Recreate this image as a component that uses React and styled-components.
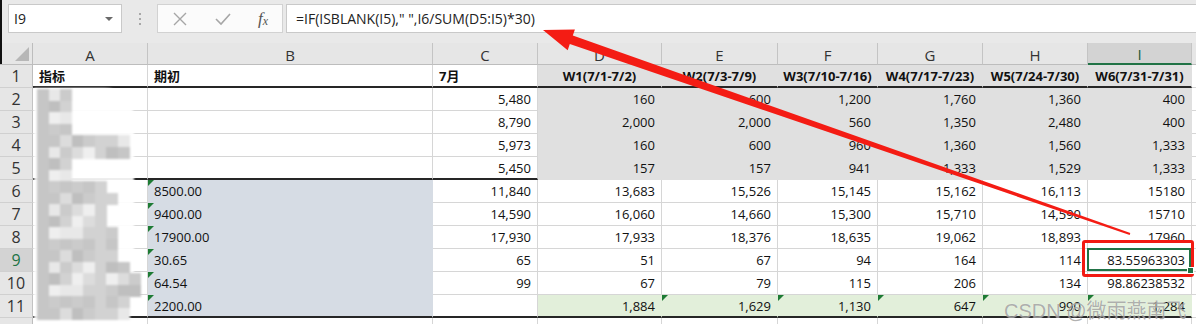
import React from 'react';
import styled, { createGlobalStyle, css } from 'styled-components';

const GlobalStyle = createGlobalStyle`
  html, body {
    margin: 0;
    padding: 0;
    background: #ffffff;
  }
  body {
    font-family: "Open Sans", "Noto Sans CJK SC", sans-serif;
  }
`;

const COLS = [33, 115, 285, 105, 124, 116, 100, 105, 105, 104];
const LETTERS = ['A', 'B', 'C', 'D', 'E', 'F', 'G', 'H', 'I'];
const GRAY = '#e0e0e0';
const BLUE = '#d6dce4';
const GREEN = '#e2efda';

const HEADERS = ['W1(7/1-7/2)', 'W2(7/3-7/9)', 'W3(7/10-7/16)', 'W4(7/17-7/23)', 'W5(7/24-7/30)', 'W6(7/31-7/31)'];

const ROWS = [
    { b: '', c: '5,480', w: ['160', '600', '1,200', '1,760', '1,360', '400'] },
    { b: '', c: '8,790', w: ['2,000', '2,000', '560', '1,350', '2,480', '400'] },
    { b: '', c: '5,973', w: ['160', '600', '960', '1,360', '1,560', '1,333'] },
    { b: '', c: '5,450', w: ['157', '157', '941', '1,333', '1,529', '1,333'] },
    { b: '8500.00', c: '11,840', w: ['13,683', '15,526', '15,145', '15,162', '16,113', '15180'] },
    { b: '9400.00', c: '14,590', w: ['16,060', '14,660', '15,300', '15,710', '14,590', '15710'] },
    { b: '17900.00', c: '17,930', w: ['17,933', '18,376', '18,635', '19,062', '18,893', '17960'] },
    { b: '30.65', c: '65', w: ['51', '67', '94', '164', '114', '83.55963303'] },
    { b: '64.54', c: '99', w: ['67', '79', '115', '206', '134', '98.86238532'] },
    { b: '2200.00', c: '', w: ['1,884', '1,629', '1,130', '647', '990', '1,284'] },
];

// pixelated blur over column A, one entry per 11.5px band from row 2 down
const BAND_WIDTHS = [3, 3, 3, 3, 8, 8, 3, 3, 6, 7, 6, 6, 7, 7, 7, 8, 9, 9, 8, 8];
const SHADES = ['#c6c6c6', '#d2d2d2', '#dcdcdc', '#e8e8e8', '#bfbfbf', '#efefef', '#cbcbcb'];

const App = () => {
    const blocks = [];
    BAND_WIDTHS.forEach((count, row) => {
        for (let col = 0; col < count; col++) {
            const shade = SHADES[(row * 7 + col * 3 + (row * col) % 5) % SHADES.length];
            blocks.push({ x: 3 + col * 11.5, y: 1 + row * 11.5, shade });
        }
    });

    return (
        <Frame>
            <GlobalStyle />
            <FormulaBar>
                <NameBox>
                    <span>I9</span>
                    <Caret />
                </NameBox>
                <Grip>
                    <i />
                    <i />
                    <i />
                </Grip>
                <FxButtons>
                    <svg width="16" height="16" viewBox="0 0 16 16">
                        <path d="M2 2 L14 14 M14 2 L2 14" stroke="#a6a6a6" strokeWidth="1.4" fill="none" />
                    </svg>
                    <svg width="18" height="16" viewBox="0 0 18 16">
                        <path d="M2 8 L7 13 L16 3" stroke="#a6a6a6" strokeWidth="1.6" fill="none" />
                    </svg>
                    <FxLabel>
                        f<sub>x</sub>
                    </FxLabel>
                </FxButtons>
                <FormulaInput>=IF(ISBLANK(I5)," ",I6/SUM(D5:I5)*30)</FormulaInput>
            </FormulaBar>

            <Sheet>
                <Corner />
                {LETTERS.map((l) => (
                    <ColHead key={l} $active={l === 'I'}>
                        {l}
                    </ColHead>
                ))}
                <ColHead />

                <RowHead>1</RowHead>
                <Cell $bold $thick>指标</Cell>
                <Cell $bold $thick>期初</Cell>
                <Cell $bold $thick>7月</Cell>
                {HEADERS.map((h) => (
                    <Cell key={h} $bold $thick $align="center" $fill={GRAY}>
                        {h}
                    </Cell>
                ))}
                <Cell />

                {ROWS.map((r, i) => {
                    const n = i + 2;
                    const last = n === 11;
                    const wFill = n <= 5 ? GRAY : last ? GREEN : null;
                    return (
                        <React.Fragment key={n}>
                            <RowHead $active={n === 9}>{n}</RowHead>
                            <Cell $thick={n === 5 || last} />
                            <Cell $thick={n === 5 || last} $fill={n >= 6 ? BLUE : null} $flag={n >= 6}>
                                {r.b}
                            </Cell>
                            <Cell $align="right" $thick={n === 5 || last}>
                                {r.c}
                            </Cell>
                            {r.w.map((v, k) => (
                                <Cell
                                    key={k}
                                    $align="right"
                                    $fill={wFill}
                                    $thick={last}
                                    $flag={last && k > 0}
                                    $selected={n === 9 && k === 5}
                                >
                                    {v}
                                </Cell>
                            ))}
                            <Cell />
                        </React.Fragment>
                    );
                })}

                <RowHead />
                {LETTERS.map((l) => (
                    <Cell key={l} />
                ))}
                <Cell />
            </Sheet>

            <Mosaic>
                {blocks.map((b, i) => (
                    <Block key={i} style={{ left: b.x, top: b.y, background: b.shade }} />
                ))}
            </Mosaic>

            <Highlight />

            <Arrow width="1196" height="324" viewBox="0 0 1196 324">
                <polygon
                    points="543,30 574.9,29.5 572.8,35.6 1130.3,233.1 1129.7,234.9 569.8,44.1 567.7,50.2"
                    fill="#f41c14"
                />
            </Arrow>

            <Watermark>CSDN @微雨燕南飞</Watermark>
        </Frame>
    );
};

const Frame = styled.div`
    position: relative;
    width: 1196px;
    height: 324px;
    overflow: hidden;
    background: #ffffff;
`;

const FormulaBar = styled.div`
    height: 43px;
    box-sizing: border-box;
    display: flex;
    align-items: flex-start;
    padding: 4px 0 0 8px;
    background: #e9e9e9;
    border-left: 2px solid #111;
`;

const NameBox = styled.div`
    width: 114px;
    height: 29px;
    box-sizing: border-box;
    margin-left: -2px;
    background: #ffffff;
    border: 1px solid #c9c9c9;
    display: flex;
    align-items: center;
    justify-content: space-between;
    padding: 0 8px 0 5px;
    font-size: 14px;
    color: #222;
`;

const Caret = styled.span`
    width: 0;
    height: 0;
    border-left: 4px solid transparent;
    border-right: 4px solid transparent;
    border-top: 4px solid #6a6a6a;
`;

const Grip = styled.div`
    width: 35px;
    height: 29px;
    display: flex;
    flex-direction: column;
    align-items: center;
    justify-content: center;
    gap: 3px;

    i {
        width: 2px;
        height: 2px;
        background: #a8a8a8;
    }
`;

const FxButtons = styled.div`
    width: 126px;
    height: 29px;
    box-sizing: border-box;
    background: #fbfbfb;
    border: 1px solid #d2d2d2;
    display: flex;
    align-items: center;
    justify-content: space-between;
    padding: 0 14px 0 14px;
`;

const FxLabel = styled.span`
    font-family: "Liberation Serif", serif;
    font-style: italic;
    font-size: 17px;
    color: #555;
    line-height: 1;

    sub {
        font-size: 12px;
        vertical-align: -1px;
    }
`;

const FormulaInput = styled.div`
    flex: 1;
    height: 29px;
    box-sizing: border-box;
    margin-left: 3px;
    background: #ffffff;
    border: 1px solid #c9c9c9;
    border-right: none;
    display: flex;
    align-items: center;
    padding-left: 9px;
    font-size: 14px;
    color: #222;
    white-space: pre;
`;

const Sheet = styled.div`
    display: grid;
    grid-template-columns: ${COLS.map((w) => `${w}px`).join(' ')} 1fr;
    grid-template-rows: 22px repeat(11, 23px) 23px;
    font-size: 13px;
    color: #111;
`;

const headBase = css`
    box-sizing: border-box;
    background: #e6e6e6;
    display: flex;
    align-items: center;
    justify-content: center;
    font-size: 15px;
    color: #333;
`;

const Corner = styled.div`
    ${headBase};
    position: relative;
    border-right: 1px solid #bdbdbd;
    border-bottom: 1px solid #bdbdbd;
    box-shadow: inset 2px 0 0 #111;

    &::after {
        content: '';
        position: absolute;
        right: 3px;
        bottom: 3px;
        width: 0;
        height: 0;
        border-left: 14px solid transparent;
        border-bottom: 14px solid #b7b7b7;
    }
`;

const ColHead = styled.div`
    ${headBase};
    border-right: 1px solid #c4c4c4;
    border-bottom: 1px solid #bdbdbd;
    padding-top: 2px;
    ${(p) =>
        p.$active &&
        css`
            background: #d3d3d3;
            border-bottom: 2px solid #217346;
            color: #1c5a37;
        `}
`;

const RowHead = styled.div`
    ${headBase};
    font-size: 16px;
    border-right: 1px solid #bdbdbd;
    border-bottom: 1px solid #d0d0d0;
    ${(p) =>
        p.$active &&
        css`
            background: #d3d3d3;
            color: #217346;
        `}
`;

const Cell = styled.div`
    position: relative;
    box-sizing: border-box;
    display: flex;
    align-items: center;
    justify-content: ${(p) => (p.$align === 'right' ? 'flex-end' : p.$align === 'center' ? 'center' : 'flex-start')};
    padding: 0 6px;
    white-space: nowrap;
    overflow: visible;
    font-weight: ${(p) => (p.$bold ? 700 : 400)};
    background: ${(p) => p.$fill || '#ffffff'};
    border-right: 1px solid ${(p) => p.$fill || '#d6d6d6'};
    border-bottom: ${(p) => (p.$thick ? '2px solid #262626' : `1px solid ${p.$fill || '#d6d6d6'}`)};

    ${(p) =>
        p.$flag &&
        css`
            &::before {
                content: '';
                position: absolute;
                left: 0;
                top: 0;
                width: 0;
                height: 0;
                border-top: 6px solid #1e7b34;
                border-right: 6px solid transparent;
            }
        `}

    ${(p) =>
        p.$selected &&
        css`
            &::after {
                content: '';
                position: absolute;
                left: -1px;
                top: -1px;
                right: 0;
                bottom: 0;
                border: 2px solid #217346;
            }
            &::before {
                content: '';
                position: absolute;
                right: -3px;
                bottom: -3px;
                width: 5px;
                height: 5px;
                background: #217346;
                border: 1px solid #fff;
                z-index: 2;
            }
        `}
`;

const Mosaic = styled.div`
    position: absolute;
    left: 34px;
    top: 88px;
    width: 100px;
    height: 232px;
    pointer-events: none;
    background: rgba(255, 255, 255, 0.92);
    border-radius: 0 30px 30px 0;
    filter: blur(1.2px);
`;

const Block = styled.div`
    position: absolute;
    width: 12px;
    height: 12px;
`;

const Highlight = styled.div`
    position: absolute;
    left: 1082px;
    top: 240px;
    width: 112px;
    height: 37px;
    box-sizing: border-box;
    border: 3px solid #f21a12;
    border-radius: 3px;
    pointer-events: none;
`;

const Arrow = styled.svg`
    position: absolute;
    left: 0;
    top: 0;
    pointer-events: none;
`;

const Watermark = styled.div`
    position: absolute;
    left: 1004px;
    top: 295px;
    font-family: "Liberation Sans", "Noto Sans CJK SC", sans-serif;
    font-size: 20px;
    color: rgba(110, 110, 110, 0.55);
    text-shadow: 0 0 1px rgba(255, 255, 255, 0.8);
    white-space: nowrap;
    pointer-events: none;
`;

export default App;
